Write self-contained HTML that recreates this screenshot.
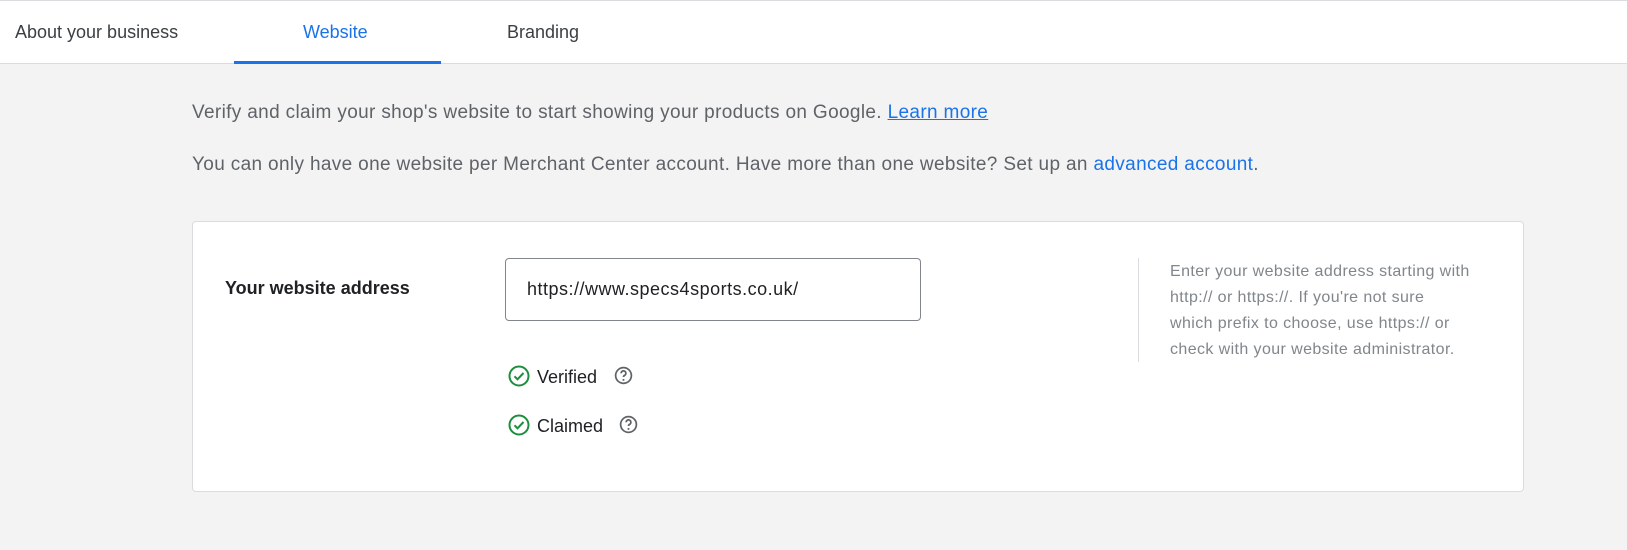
<!DOCTYPE html>
<html><head><style>
body{margin:0;width:1627px;height:550px;background:#f3f3f3;font-family:"Liberation Sans",Arial,sans-serif;position:relative;overflow:hidden}
.hdr{position:absolute;left:0;top:0;width:1627px;height:64px;background:#fff;border-top:1px solid #dadce0;border-bottom:1px solid #dadce0;box-sizing:border-box}
.tab{position:absolute;top:21px;font-size:18px;color:#3c4043}
.ul{position:absolute;left:234px;top:60px;width:207px;height:3px;background:#1a73e8}
.p{position:absolute;left:192px;font-size:19px;letter-spacing:0.35px;color:#5f6368}
a{color:#1a73e8}
.card{position:absolute;left:192px;top:221px;width:1332px;height:271px;background:#fff;border:1px solid #dadce0;border-radius:4px;box-sizing:border-box}
.abs{position:absolute}
</style></head><body>
<div class="hdr">
<div class="tab" style="left:15px">About your business</div>
<div class="tab" style="left:303px;color:#1a73e8">Website</div>
<div class="tab" style="left:507px">Branding</div>
<div class="ul"></div>
</div>
<div class="p" style="top:102px">Verify and claim your shop's website to start showing your products on Google. <a style="text-decoration:underline">Learn more</a></div>
<div class="p" style="top:154px">You can only have one website per Merchant Center account. Have more than one website? Set up an <a style="text-decoration:none">advanced account</a>.</div>
<div class="card"></div>
<div class="abs" style="left:225px;top:278px;font-size:18px;color:#202124;font-weight:bold">Your website address</div>
<div class="abs" style="left:505px;top:258px;width:416px;height:63px;border:1px solid #80868b;border-radius:4px;box-sizing:border-box;background:#fff"></div>
<div class="abs" style="left:527px;top:279px;font-size:18px;letter-spacing:0.5px;color:#202124">https://www.specs4sports.co.uk/</div>
<div class="abs" style="left:1138px;top:258px;width:1px;height:104px;background:#dadce0"></div>
<div class="abs" style="left:1170px;top:259px;font-size:16px;letter-spacing:0.4px;line-height:26px;color:#80868b;width:340px">Enter your website address starting with<br>http:// or https://. If you're not sure<br>which prefix to choose, use https:// or<br>check with your website administrator.</div>
<svg class="abs" style="left:507px;top:364px" width="24" height="24" viewBox="0 0 24 24"><circle cx="12" cy="12" r="9.5" fill="none" stroke="#1e8e3e" stroke-width="2"/><path d="M7.5 12.3l3 3 6-6.3" fill="none" stroke="#1e8e3e" stroke-width="2"/></svg>
<div class="abs" style="left:537px;top:367px;font-size:18px;color:#202124">Verified</div>
<svg class="abs" style="left:613px;top:365px" width="21" height="21" viewBox="0 0 24 24"><circle cx="12" cy="12" r="9" fill="none" stroke="#5f6368" stroke-width="2"/><path d="M9.3 9.5a2.7 2.7 0 1 1 3.8 2.4c-.8.4-1.1.9-1.1 1.8" fill="none" stroke="#5f6368" stroke-width="2"/><circle cx="12" cy="17" r="1.2" fill="#5f6368"/></svg>
<svg class="abs" style="left:507px;top:413px" width="24" height="24" viewBox="0 0 24 24"><circle cx="12" cy="12" r="9.5" fill="none" stroke="#1e8e3e" stroke-width="2"/><path d="M7.5 12.3l3 3 6-6.3" fill="none" stroke="#1e8e3e" stroke-width="2"/></svg>
<div class="abs" style="left:537px;top:416px;font-size:18px;color:#202124">Claimed</div>
<svg class="abs" style="left:618px;top:414px" width="21" height="21" viewBox="0 0 24 24"><circle cx="12" cy="12" r="9" fill="none" stroke="#5f6368" stroke-width="2"/><path d="M9.3 9.5a2.7 2.7 0 1 1 3.8 2.4c-.8.4-1.1.9-1.1 1.8" fill="none" stroke="#5f6368" stroke-width="2"/><circle cx="12" cy="17" r="1.2" fill="#5f6368"/></svg>
</body></html>
